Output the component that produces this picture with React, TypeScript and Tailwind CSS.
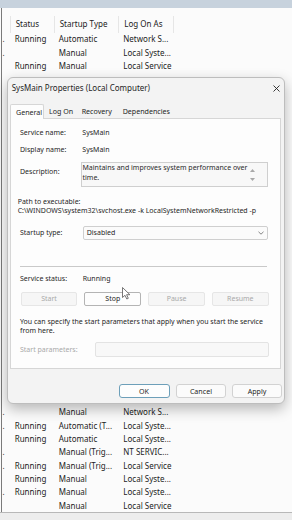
import React from "react"

type Row = { status: string; startup: string; logon: string; dot: boolean }

const topRows: Row[] = [
  { status: "Running", startup: "Automatic", logon: "Network S...", dot: true },
  { status: "", startup: "Manual", logon: "Local Syste...", dot: true },
  { status: "Running", startup: "Manual", logon: "Local Service", dot: false },
]

// rows hidden behind the dialog
const hiddenRows: Row[] = Array.from({ length: 25 }, () => ({
  status: "",
  startup: "",
  logon: "",
  dot: false,
}))

const bottomRows: Row[] = [
  { status: "", startup: "Manual", logon: "Network S...", dot: true },
  { status: "Running", startup: "Automatic (T...", logon: "Local Syste...", dot: true },
  { status: "Running", startup: "Automatic", logon: "Local Syste...", dot: false },
  { status: "", startup: "Manual (Trig...", logon: "NT SERVIC...", dot: true },
  { status: "Running", startup: "Manual (Trig...", logon: "Local Service", dot: true },
  { status: "Running", startup: "Manual", logon: "Local Syste...", dot: false },
  { status: "Running", startup: "Manual", logon: "Local Syste...", dot: true },
  { status: "", startup: "Manual", logon: "Local Service", dot: false },
]

const rows = [...topRows, ...hiddenRows, ...bottomRows]

const ListRow = ({ row }: { row: Row }) => (
  <div className="grid grid-cols-[8.7px_44px_64.6px_56px] h-[13.343px] items-center whitespace-nowrap">
    <span className="pl-[1.5px] text-[#333] leading-none">{row.dot ? "." : ""}</span>
    <span className="pl-[5px]">{row.status}</span>
    <span className="pl-[5px]">{row.startup}</span>
    <span className="pl-[5px]">{row.logon}</span>
  </div>
)

const SmallBtn = ({ label, enabled }: { label: string; enabled?: boolean }) => (
  <div
    className={
      enabled
        ? "w-[56.6px] h-[14px] flex items-center justify-center rounded-[2px] border border-[#b4b4b4] bg-[#fdfdfd] text-[#1f1f1f]"
        : "w-[56.6px] h-[14px] flex items-center justify-center rounded-[2px] border border-[#e6e6e6] bg-[#f6f6f6] text-[#a9a9a9]"
    }
  >
    {label}
  </div>
)

const Dialog = () => (
  <div className="absolute left-[7px] top-[77px] w-[278px] h-[327px] rounded-[6px] border border-[#bdbdbd] bg-[#f3f3f3] shadow-[0_5px_14px_rgba(0,0,0,0.28)] text-[#1f1f1f]">
    {/* title bar */}
    <div className="h-[26px] flex items-start justify-between pl-[3.7px] pr-[4px] pt-[5.3px]">
      <span className="text-[8px] leading-[10px] whitespace-nowrap">SysMain Properties (Local Computer)</span>
      <svg width="7" height="7" viewBox="0 0 7 7" className="mt-[1.5px]">
        <path d="M0.5 0.5 L6.5 6.5 M6.5 0.5 L0.5 6.5" stroke="#222" strokeWidth="0.9" />
      </svg>
    </div>
    {/* tabs */}
    <div className="h-[14px] flex items-stretch pl-[2px] text-[7.1px]">
      <div className="w-[34px] pl-[5px] flex items-center bg-[#fdfdfd] border border-b-0 border-[#d6d6d6] rounded-t-[2px] relative z-10 h-[15px]">General</div>
      <div className="w-[34.5px] pl-[5px] flex items-center">Log On</div>
      <div className="w-[40px] pl-[3.2px] flex items-center">Recovery</div>
      <div className="pl-[4.2px] flex items-center">Dependencies</div>
    </div>
    {/* panel */}
    <div className="mx-[2px] w-[271px] h-[251px] border border-[#d6d6d6] bg-[#fdfdfd] flex flex-col text-[7px] leading-[10px] relative">
      <div className="flex mt-[9.3px] h-[10px] pl-[9px]">
        <span className="w-[62.3px]">Service name:</span>
        <span>SysMain</span>
      </div>
      <div className="flex mt-[6.7px] h-[10px] pl-[9px]">
        <span className="w-[62.3px]">Display name:</span>
        <span>SysMain</span>
      </div>
      <div className="flex mt-[7.3px] pl-[9px]">
        <span className="w-[61px] mt-[5px]">Description:</span>
        <div className="w-[187.3px] h-[25px] border border-[#cfcfcf] bg-[#f8f8f8] flex">
          <span className="flex-1 min-w-0 pl-[0.5px] text-[#2a2a2a] whitespace-nowrap">
            Maintains and improves system performance over
            <br />
            time.
          </span>
          <div className="w-[10px] mr-[10px] shrink-0 flex flex-col items-center pt-[6px] gap-[6px]">
            <svg width="5" height="3" viewBox="0 0 5 3"><path d="M2.5 0 L5 3 L0 3 Z" fill="#a8a8a8" /></svg>
            <svg width="5" height="3" viewBox="0 0 5 3"><path d="M0 0 L5 0 L2.5 3 Z" fill="#a8a8a8" /></svg>
          </div>
        </div>
      </div>
      <div className="mt-[9.9px] h-[9px] leading-[9px] pl-[6.7px]">Path to executable:</div>
      <div className="h-[9px] leading-[9px] pl-[6.7px] whitespace-nowrap">C:\WINDOWS\system32\svchost.exe -k LocalSystemNetworkRestricted -p</div>
      <div className="flex items-center mt-[10.8px] pl-[9px]">
        <span className="w-[62.7px]">Startup type:</span>
        <div className="w-[185.3px] h-[13.7px] border border-[#cfcfcf] bg-[#fbfbfb] rounded-[2px] flex items-center justify-between pl-[3px] pr-[3px]">
          <span>Disabled</span>
          <svg width="6" height="4" viewBox="0 0 6 4"><path d="M0.5 0.8 L3 3.2 L5.5 0.8" stroke="#666" strokeWidth="0.8" fill="none" /></svg>
        </div>
      </div>
      <div className="mt-[26.6px] ml-[9px] w-[246.7px] h-px bg-[#c9c9c9]" />
      <div className="flex mt-[6.7px] h-[10px] pl-[9px]">
        <span className="w-[62.7px]">Service status:</span>
        <span>Running</span>
      </div>
      <div className="flex mt-[8.3px] pl-[9.7px] gap-[7.2px]">
        <SmallBtn label="Start" />
        <SmallBtn label="Stop" enabled />
        <SmallBtn label="Pause" />
        <SmallBtn label="Resume" />
      </div>
      <div className="mt-[10.3px] pl-[9px] leading-[9.4px] whitespace-nowrap">
        You can specify the start parameters that apply when you start the service
        <br />
        from here.
      </div>
      <div className="flex items-center mt-[6.9px] pl-[9px]">
        <span className="w-[75px] text-[#a9a9a9]">Start parameters:</span>
        <div className="w-[174.3px] h-[15px] border border-[#e3e3e3] bg-[#f8f8f8] rounded-[2px]" />
      </div>
      {/* mouse pointer */}
      <svg width="9" height="13" viewBox="0 0 9 13" className="absolute left-[110.7px] top-[167.7px]">
        <path d="M0.5 0.5 L0.5 10.5 L3 8.3 L4.8 12 L6.3 11.3 L4.6 7.7 L7.9 7.7 Z" fill="#fff" stroke="#555" strokeWidth="0.8" strokeLinejoin="round" />
      </svg>
    </div>
    {/* footer buttons */}
    <div className="flex justify-end mt-[15.3px] pr-[2.3px] gap-[6.4px] text-[7.1px]">
      <div className="w-[51px] h-[14px] flex items-center justify-center rounded-[3px] border border-[#6d9fb9] bg-[#fdfdfd]">OK</div>
      <div className="w-[50px] h-[14px] flex items-center justify-center rounded-[3px] border border-[#d2d2d2] bg-[#fbfbfb]">Cancel</div>
      <div className="w-[49.4px] h-[14px] flex items-center justify-center rounded-[3px] border border-[#d2d2d2] bg-[#fbfbfb]">Apply</div>
    </div>
  </div>
)

export default function App() {
  return (
    <div className="relative w-[292px] h-[520px] overflow-hidden bg-[#fbfbfb] text-[8px] text-[#1c1c1c] font-['Noto_Sans',sans-serif]">
      <div className="h-[8px] bg-[#c7d2dd]" />
      <div className="border-l border-[#7a7a7a] ml-px">
        <div className="h-[24.64px] flex items-end">
          <div className="grid grid-cols-[7.7px_44px_64.6px_56px] h-[17px] items-center w-full">
            <span />
            <span className="pl-[5px] h-full flex items-center border-l border-[#e6e6e6]">Status</span>
            <span className="pl-[5px] h-full flex items-center border-l border-[#e6e6e6]">Startup Type</span>
            <span className="pl-[5px] h-full flex items-center border-x border-[#e6e6e6]">Log On As</span>
          </div>
        </div>
        <div className="-ml-px">
          {rows.map((r, i) => (
            <ListRow key={i} row={r} />
          ))}
        </div>
      </div>
      <div className="h-px bg-[#b8b8b8]" />
      <div className="h-[10px] bg-[#ededed]" />
      <Dialog />
    </div>
  )
}
